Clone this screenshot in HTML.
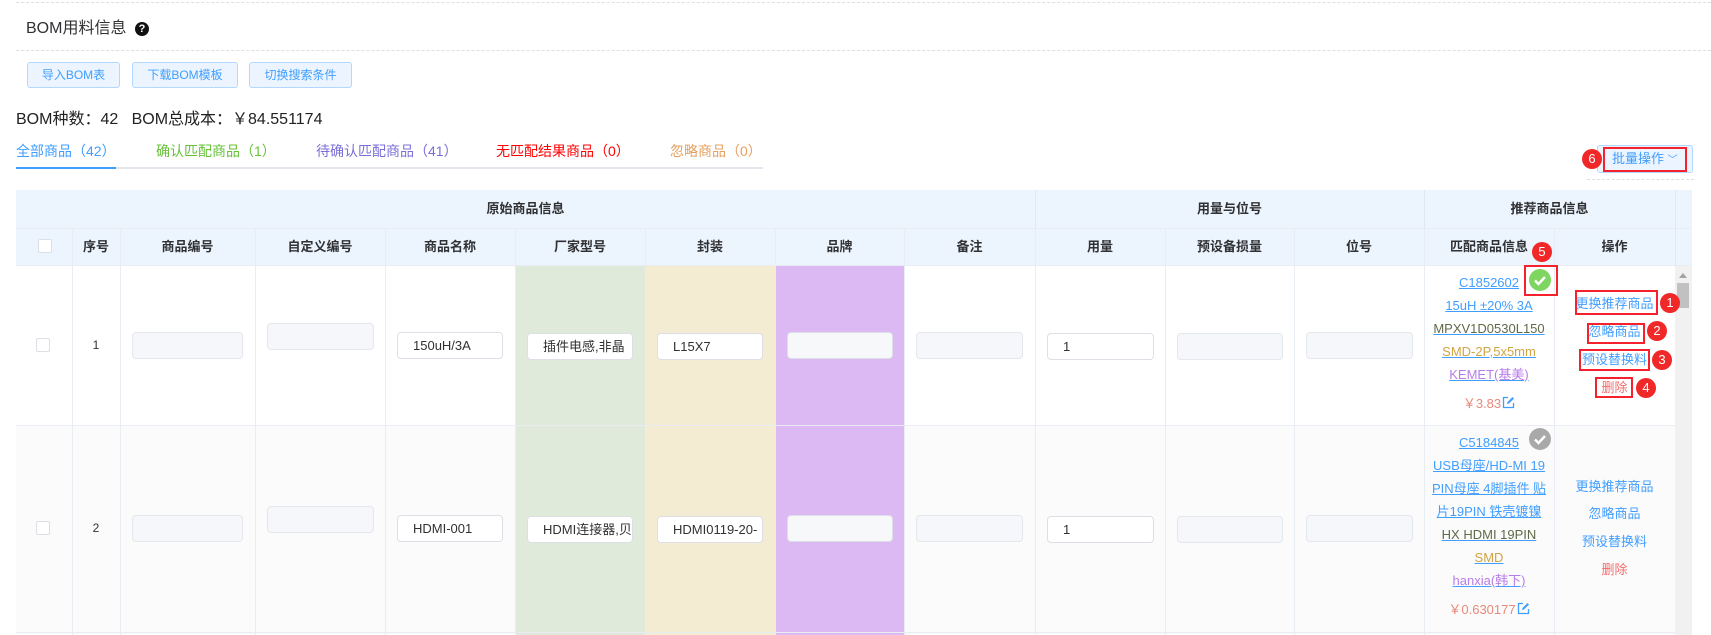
<!DOCTYPE html>
<html><head><meta charset="utf-8"><style>
*{margin:0;padding:0;box-sizing:border-box}
body{width:1711px;height:635px;overflow:hidden;background:#fff;font-family:"Liberation Sans","Noto Sans CJK SC",sans-serif;color:#303133;position:relative}
.a{position:absolute}
.dash{position:absolute;border-top:1px dashed #dcdfe6}
.btn{position:absolute;top:62px;height:26px;border:1px solid #b3d8ff;background:#ecf5ff;color:#409eff;font-size:12px;line-height:24px;text-align:center;border-radius:3px}
.tab{position:absolute;top:142px;font-size:14px;line-height:18px}
.col{position:absolute;top:266px;height:369px}
.vl{position:absolute;top:228px;height:407px;width:1px;background:#e8ecf3}
.hl{position:absolute;height:1px;background:#e8ecf3;left:16px;width:1659px}
.th{position:absolute;font-size:13px;font-weight:bold;text-align:center;line-height:16px}
.in{position:absolute;height:27px;border:1px solid #dcdfe6;background:#fff;border-radius:4px;font-size:13px;line-height:25px;padding-left:15px;white-space:nowrap;overflow:hidden;color:#303133}
.dis{background:#f5f7fa;border-color:#e4e7ed}
.cb{position:absolute;width:14px;height:14px;border:1px solid #dcdfe6;border-radius:2px;background:#fff}
.m{position:absolute;left:1424px;width:130px;text-align:center;font-size:13px;line-height:16px;text-decoration:underline;text-decoration-color:#409eff;white-space:nowrap}
.op{position:absolute;left:1554px;width:121px;text-align:center;font-size:13px;line-height:16px;color:#409eff}
.rb{position:absolute;border:2px solid #f5222d}
.bd{position:absolute;width:20px;height:20px;border-radius:50%;background:#f02828;color:#fff;font-size:13px;line-height:20px;text-align:center}
.ed{display:inline-block;vertical-align:-1px;margin-left:1px}
</style></head><body>
<div class="dash" style="left:16px;top:2px;width:1695px"></div>
<div class="a" style="left:26px;top:19px;font-size:16px;line-height:20px">BOM用料信息</div>
<div class="a" style="left:135px;top:22px;width:14px;height:14px;border-radius:50%;background:#111;color:#fff;font-size:11px;font-weight:bold;line-height:14px;text-align:center">?</div>
<div class="dash" style="left:16px;top:50px;width:1695px"></div>
<div class="btn" style="left:27px;width:93px">导入BOM表</div>
<div class="btn" style="left:132px;width:106px">下载BOM模板</div>
<div class="btn" style="left:249px;width:103px">切换搜索条件</div>
<div class="a" style="left:16px;top:110px;font-size:16px;line-height:20px;color:#222">BOM种数：42&nbsp;&nbsp;&nbsp;BOM总成本：￥84.551174</div>
<div class="tab" style="left:16px;color:#409eff">全部商品（42）</div>
<div class="tab" style="left:156px;color:#67c23a">确认匹配商品（1）</div>
<div class="tab" style="left:316px;color:#7a6fd8">待确认匹配商品（41）</div>
<div class="tab" style="left:496px;color:#f00">无匹配结果商品（0）</div>
<div class="tab" style="left:670px;color:#e6a060">忽略商品（0）</div>
<div class="a" style="left:16px;top:167px;width:747px;height:2px;background:#e4e7ed"></div>
<div class="a" style="left:16px;top:167px;width:100px;height:2px;background:#409eff"></div>
<div class="a" style="left:1597px;top:145px;width:96px;height:28px;border:1px solid #b3d8ff;background:#ecf5ff;border-radius:3px"></div>
<div class="rb" style="left:1603px;top:147px;width:84px;height:25px"></div>
<div class="a" style="left:1612px;top:151px;font-size:13px;color:#409eff;line-height:16px">批量操作 <span style="font-size:10px">﹀</span></div>
<div class="bd" style="left:1582px;top:149px">6</div>
<div class="dash" style="left:1587px;top:179px;width:107px"></div>

<div class="a" style="left:16px;top:190px;width:1676px;height:76px;background:#ecf4fe"></div>
<div class="a" style="left:1675px;top:266px;width:17px;height:369px;background:#f1f1f1"></div>
<div class="a" style="left:1677px;top:283px;width:12px;height:25px;background:#c1c1c1"></div>
<div class="a" style="left:1679px;top:273px;width:0;height:0;border-left:4px solid transparent;border-right:4px solid transparent;border-bottom:5px solid #a3a3a3"></div>
<div class="col" style="left:16px;width:1659px;height:160px;background:#fff"></div>
<div class="col" style="left:16px;top:426px;width:1659px;height:209px;background:#fbfbfb"></div>
<div class="col" style="left:515px;width:130px;background:#e0eadb"></div>
<div class="col" style="left:645px;width:130px;background:#f3ecd3"></div>
<div class="col" style="left:775px;width:129px;background:#dcb9f3"></div>
<div class="hl" style="top:228px;width:1676px"></div>
<div class="hl" style="top:265px;width:1676px"></div>
<div class="hl" style="top:425px"></div>
<div class="hl" style="top:632px"></div>
<div class="a" style="left:1035px;top:190px;width:1px;height:38px;background:#e0e7f2"></div>
<div class="a" style="left:1424px;top:190px;width:1px;height:38px;background:#e0e7f2"></div>
<div class="a" style="left:1675px;top:190px;width:1px;height:76px;background:#e0e7f2"></div>
<div class="vl" style="left:72px"></div><div class="vl" style="left:120px"></div><div class="vl" style="left:255px"></div><div class="vl" style="left:385px"></div><div class="vl" style="left:515px"></div><div class="vl" style="left:645px"></div><div class="vl" style="left:775px"></div><div class="vl" style="left:904px"></div><div class="vl" style="left:1035px"></div><div class="vl" style="left:1165px"></div><div class="vl" style="left:1294px"></div><div class="vl" style="left:1424px"></div><div class="vl" style="left:1554px"></div>
<div class="th" style="left:16px;width:1019px;top:201px">原始商品信息</div>
<div class="th" style="left:1035px;width:389px;top:201px">用量与位号</div>
<div class="th" style="left:1424px;width:251px;top:201px">推荐商品信息</div>
<div class="cb" style="left:38px;top:239px"></div>
<div class="th" style="left:72px;width:48px;top:239px">序号</div>
<div class="th" style="left:120px;width:135px;top:239px">商品编号</div>
<div class="th" style="left:255px;width:130px;top:239px">自定义编号</div>
<div class="th" style="left:385px;width:130px;top:239px">商品名称</div>
<div class="th" style="left:515px;width:130px;top:239px">厂家型号</div>
<div class="th" style="left:645px;width:130px;top:239px">封装</div>
<div class="th" style="left:775px;width:129px;top:239px">品牌</div>
<div class="th" style="left:904px;width:131px;top:239px">备注</div>
<div class="th" style="left:1035px;width:130px;top:239px">用量</div>
<div class="th" style="left:1165px;width:129px;top:239px">预设备损量</div>
<div class="th" style="left:1294px;width:130px;top:239px">位号</div>
<div class="th" style="left:1424px;width:130px;top:239px">匹配商品信息</div>
<div class="th" style="left:1554px;width:121px;top:239px">操作</div>

<div class="cb" style="left:36px;top:338px"></div>
<div class="a" style="left:72px;width:48px;top:338px;text-align:center;font-size:12px">1</div>
<div class="in dis" style="left:132px;top:332px;width:111px"></div>
<div class="in dis" style="left:267px;top:323px;width:107px"></div>
<div class="in" style="left:397px;top:332px;width:106px">150uH/3A</div>
<div class="in" style="left:527px;top:333px;width:106px">插件电感,非晶</div>
<div class="in" style="left:657px;top:333px;width:106px">L15X7</div>
<div class="in" style="left:787px;top:332px;width:106px;background:#f7f8fa"></div>
<div class="in dis" style="left:916px;top:332px;width:107px"></div>
<div class="in" style="left:1047px;top:333px;width:107px">1</div>
<div class="in dis" style="left:1177px;top:333px;width:106px"></div>
<div class="in dis" style="left:1306px;top:332px;width:107px"></div>
<div class="m" style="top:275px;color:#409eff">C1852602</div>
<div class="m" style="top:298px;color:#409eff">15uH ±20% 3A</div>
<div class="m" style="top:321px;color:#5f6a48">MPXV1D0530L150</div>
<div class="m" style="top:344px;color:#d1a444">SMD-2P,5x5mm</div>
<div class="m" style="top:367px;color:#b77de8">KEMET(基美)</div>
<div class="m" style="top:396px;color:#e8897a;text-decoration:none">￥3.83<svg class="ed" width="13" height="13" viewBox="0 0 13 13"><path d="M6 1.5H1.5v10h10V7" fill="none" stroke="#409eff" stroke-width="1.3"/><path d="M5 8l.5-2L10.5 1l1.5 1.5-5 5z" fill="#409eff"/></svg></div>
<div class="a" style="left:1529px;top:269px;width:22px;height:22px;border-radius:50%;background:#7ed560"><svg width="22" height="22"><path d="M6 11.5l3.5 3.5 6.5-7" fill="none" stroke="#fff" stroke-width="2.4"/></svg></div>
<div class="rb" style="left:1524px;top:265px;width:34px;height:31px"></div>
<div class="bd" style="left:1532px;top:242px">5</div>
<div class="op" style="top:296px">更换推荐商品</div>
<div class="rb" style="left:1575px;top:290px;width:83px;height:25px"></div>
<div class="bd" style="left:1660px;top:293px">1</div>
<div class="op" style="top:324px">忽略商品</div>
<div class="rb" style="left:1587px;top:323px;width:58px;height:21px"></div>
<div class="bd" style="left:1647px;top:321px">2</div>
<div class="op" style="top:352px">预设替换料</div>
<div class="rb" style="left:1579px;top:349px;width:71px;height:22px"></div>
<div class="bd" style="left:1652px;top:350px">3</div>
<div class="op" style="top:380px;color:#f56c6c">删除</div>
<div class="rb" style="left:1595px;top:377px;width:38px;height:21px"></div>
<div class="bd" style="left:1636px;top:378px">4</div>

<div class="cb" style="left:36px;top:521px"></div>
<div class="a" style="left:72px;width:48px;top:521px;text-align:center;font-size:12px">2</div>
<div class="in dis" style="left:132px;top:515px;width:111px"></div>
<div class="in dis" style="left:267px;top:506px;width:107px"></div>
<div class="in" style="left:397px;top:515px;width:106px">HDMI-001</div>
<div class="in" style="left:527px;top:516px;width:106px">HDMI连接器,贝</div>
<div class="in" style="left:657px;top:516px;width:106px">HDMI0119-20-</div>
<div class="in" style="left:787px;top:515px;width:106px;background:#f7f8fa"></div>
<div class="in dis" style="left:916px;top:515px;width:107px"></div>
<div class="in" style="left:1047px;top:516px;width:107px">1</div>
<div class="in dis" style="left:1177px;top:516px;width:106px"></div>
<div class="in dis" style="left:1306px;top:515px;width:107px"></div>
<div class="m" style="top:435px;color:#409eff">C5184845</div>
<div class="m" style="top:458px;color:#409eff">USB母座/HD-MI 19</div>
<div class="m" style="top:481px;color:#409eff">PIN母座 4脚插件 贴</div>
<div class="m" style="top:504px;color:#409eff">片19PIN 铁壳镀镍</div>
<div class="m" style="top:527px;color:#5f6a48">HX HDMI 19PIN</div>
<div class="m" style="top:550px;color:#d1a444">SMD</div>
<div class="m" style="top:573px;color:#b77de8">hanxia(韩下)</div>
<div class="m" style="top:602px;color:#e8897a;text-decoration:none">￥0.630177<svg class="ed" width="13" height="13" viewBox="0 0 13 13"><path d="M6 1.5H1.5v10h10V7" fill="none" stroke="#409eff" stroke-width="1.3"/><path d="M5 8l.5-2L10.5 1l1.5 1.5-5 5z" fill="#409eff"/></svg></div>
<div class="a" style="left:1529px;top:428px;width:22px;height:22px;border-radius:50%;background:#a9a9a9"><svg width="22" height="22"><path d="M6 11.5l3.5 3.5 6.5-7" fill="none" stroke="#fff" stroke-width="2.4"/></svg></div>
<div class="op" style="top:479px">更换推荐商品</div>
<div class="op" style="top:506px">忽略商品</div>
<div class="op" style="top:534px">预设替换料</div>
<div class="op" style="top:562px;color:#f56c6c">删除</div>
</body></html>
